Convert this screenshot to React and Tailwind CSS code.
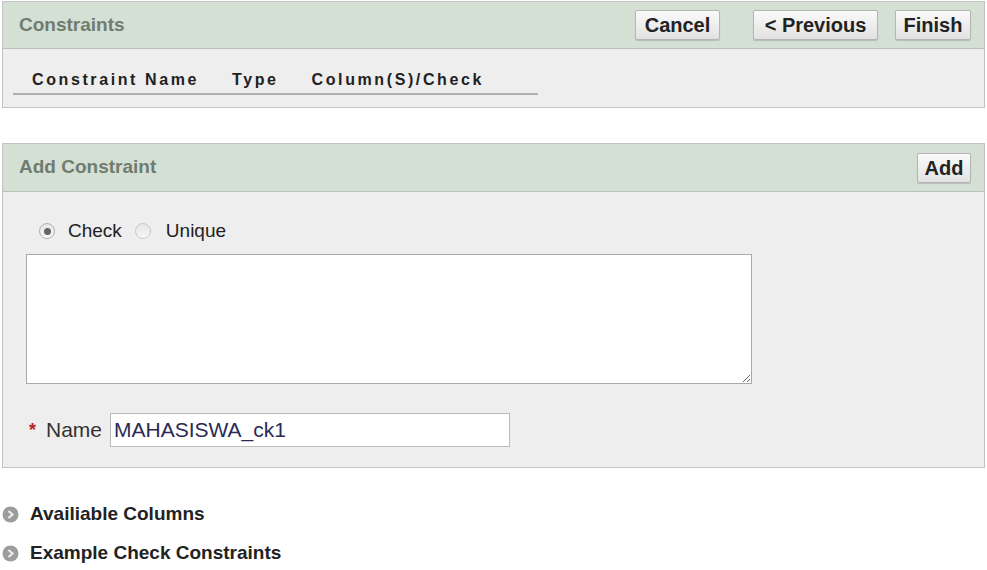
import React from 'react';

function Btn({ children, w }) {
  return (
    <button className={`${w} h-[30px] bg-gradient-to-b from-[#fafafa] to-[#e2e2e2] border border-[#b5b5b5] rounded-[2px] text-[20px] font-bold text-[#222] leading-none shadow-[0_1px_1px_rgba(0,0,0,0.15)]`}>
      {children}
    </button>
  );
}

function Bullet() {
  return (
    <svg width="17" height="17" viewBox="0 0 17 17" className="shrink-0">
      <circle cx="8.5" cy="8.5" r="8" fill="#9c9c9c" />
      <path d="M6.5 5 L10.5 8.5 L6.5 12" fill="none" stroke="#ececec" strokeWidth="2.2" />
    </svg>
  );
}

export default function App() {
  return (
    <div className="w-[987px] h-[570px] bg-white px-[2px] pt-px font-['Liberation_Sans',Arial,sans-serif] overflow-hidden">

      {/* Constraints panel */}
      <div className="border border-[#c2c2c2] bg-[#eeeeee]">
        <div className="h-[47px] bg-[#d4e0d4] border-b border-[#b8c2b8] flex items-center justify-between pl-[16px] pr-[13px]">
          <div className="text-[19px] font-bold text-[#707c70]">Constraints</div>
          <div className="flex items-center">
            <Btn w="w-[85px]">Cancel</Btn>
            <div className="w-[33px]" />
            <Btn w="w-[125px]">&lt; Previous</Btn>
            <div className="w-[17px]" />
            <Btn w="w-[76px]">Finish</Btn>
          </div>
        </div>
        <div className="h-[58px] pl-[10px] pt-[19px]">
          <div className="inline-flex border-b-2 border-[#b0b0b0] pb-[4px] w-[525px] text-[16px] leading-[18px] font-bold tracking-[2.6px] text-[#222]">
            <span className="pl-[19px]">Constraint Name</span>
            <span className="pl-[33px]">Type</span>
            <span className="pl-[33px]">Column(S)/Check</span>
          </div>
        </div>
      </div>

      {/* Add Constraint panel */}
      <div className="mt-[35px] border border-[#c2c2c2] bg-[#eeeeee]">
        <div className="h-[48px] bg-[#d4e0d4] border-b border-[#b8c2b8] flex items-center justify-between pl-[16px] pr-[13px]">
          <div className="text-[19px] font-bold text-[#707c70]">Add Constraint</div>
          <Btn w="w-[54px]">Add</Btn>
        </div>
        <div className="pl-[23px] pt-[28px] pb-[20px]">
          <div className="flex items-center h-[22px] text-[19px] text-[#222] pl-[13px]">
            <span className="w-[16px] h-[16px] rounded-full border border-[#b0b0b0] bg-gradient-to-b from-[#e6e6e6] to-[#f8f8f8] flex items-center justify-center">
              <span className="w-[7px] h-[7px] rounded-full bg-[#666]" />
            </span>
            <span className="ml-[13px]">Check</span>
            <span className="ml-[13px] w-[16px] h-[16px] rounded-full border border-[#c8c8c8] bg-gradient-to-b from-[#e6e6e6] to-[#f6f6f6]" />
            <span className="ml-[15px]">Unique</span>
          </div>
          <textarea className="mt-[12px] block w-[726px] h-[130px] bg-white border border-[#a9a9a9] outline-none resize" />
          <div className="mt-[29px] flex items-center">
            <span className="ml-[3px] text-[#b22] text-[18px] font-bold leading-none">*</span>
            <span className="ml-[10px] text-[21px] text-[#333]">Name</span>
            <input
              defaultValue="MAHASISWA_ck1"
              className="ml-[8px] w-[400px] h-[34px] bg-white border border-[#bcbcbc] px-[3px] text-[21px] text-[#2a2a55] outline-none"
            />
          </div>
        </div>
      </div>

      {/* Links */}
      <div className="mt-[35px] flex flex-col gap-[17px] text-[19px] leading-[22px] font-bold text-[#222]">
        <div className="flex items-center gap-[11px]"><Bullet />Availiable Columns</div>
        <div className="flex items-center gap-[11px]"><Bullet />Example Check Constraints</div>
      </div>
    </div>
  );
}
